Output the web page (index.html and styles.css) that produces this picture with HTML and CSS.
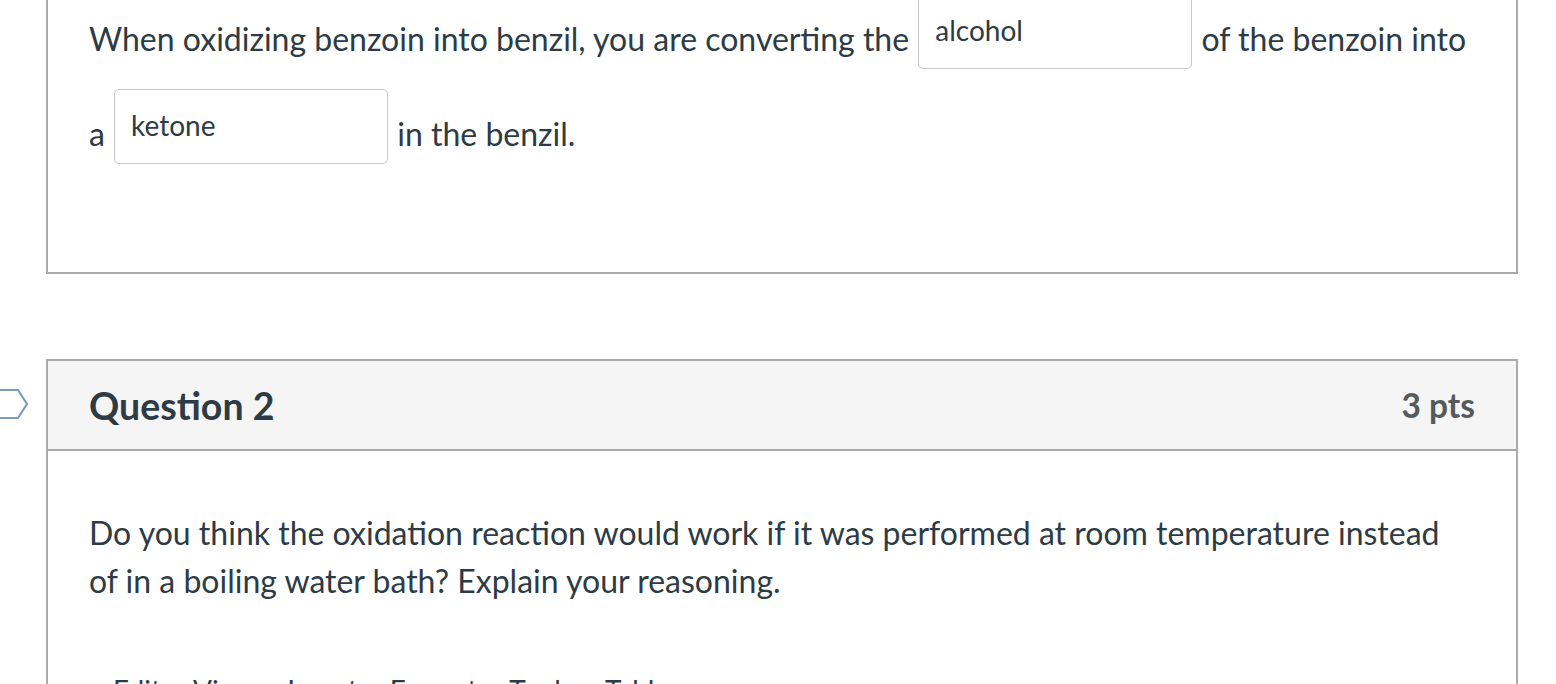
FILE: index.html
```html
<!DOCTYPE html>
<html>
<head>
<meta charset="utf-8">
<link rel="stylesheet" href="styles.css">
</head>
<body>
<div class="page">
  <section class="card card-first">
    <div class="fib">
      <div class="fib-line">When oxidizing benzoin into benzil, you are converting the <span class="blank"><span class="blank-text">alcohol</span></span> of the benzoin into</div>
      <div class="fib-line">a <span class="blank"><span class="blank-text">ketone</span></span> in the benzil.</div>
    </div>
  </section>

  <section class="card card-second">
    <div class="marker">
      <svg width="30" height="34" viewBox="0 0 30 34"><path d="M-4 3 H18 L27 17 L18 31 H-4" fill="none" stroke="#7f9cb6" stroke-width="2.2" stroke-linejoin="miter"/></svg>
    </div>
    <header class="card-header">
      <h2 class="q-title">Question 2</h2>
      <span class="q-pts">3 pts</span>
    </header>
    <div class="card-body">
      <p class="q-text">Do you think the oxidation reaction would work if it was performed at room temperature instead of in a boiling water bath? Explain your reasoning.</p>
      <div class="menubar">
        <span>Edit</span><span>View</span><span>Insert</span><span>Format</span><span>Tools</span><span>Table</span>
      </div>
    </div>
  </section>
</div>
</body>
</html>
```
FILE: styles.css
```css
html, body {
  margin: 0;
  padding: 0;
  background: #ffffff;
  overflow: hidden;
}
body {
  font-family: Lato, "Noto Sans", sans-serif;
  color: #2d3b45;
  width: 1556px;
  height: 684px;
}
.page {
  margin-left: 46px;
  width: 1472px;
  margin-top: -52px;
}
.card {
  border: 2px solid #aaaaaa;
  position: relative;
}
.card-first {
  padding: 41px 41px 91px 41px;
}
.fib {
  font-size: 32px;
}
.fib-line {
  height: 95px;
  line-height: 95px;
  white-space: nowrap;
}
.blank {
  display: inline-block;
  box-sizing: border-box;
  width: 274px;
  height: 75px;
  margin: 0 1px 0 1px;
  padding-left: 16px;
  border: 1.5px solid #c8c8c8;
  border-radius: 5px;
  line-height: 70px;
  vertical-align: 10px;
  font-size: 28px;
}
.blank-text {
  display: inline-block;
}
.card-second {
  margin-top: 85px;
}
.marker {
  position: absolute;
  left: -48px;
  top: 26px;
  width: 30px;
  height: 34px;
}
.marker svg {
  display: block;
}
.card-header {
  background: #f5f5f5;
  border-bottom: 2px solid #aaaaaa;
  height: 88px;
  padding: 0 41px;
  display: flex;
  align-items: center;
  justify-content: space-between;
}
.q-title {
  margin: 0;
  font-size: 37.5px;
  font-weight: 700;
  color: #2d3b45;
}
.q-pts {
  font-size: 33.5px;
  font-weight: 700;
  color: #555a5e;
}
.card-body {
  padding: 58px 41px 0 41px;
}
.q-text {
  margin: 0;
  max-width: 1370px;
  font-size: 32px;
  line-height: 48px;
}
.menubar {
  margin-top: 65px;
  display: flex;
  gap: 32px;
  padding-left: 24px;
  font-size: 28px;
  line-height: 40px;
}
```
